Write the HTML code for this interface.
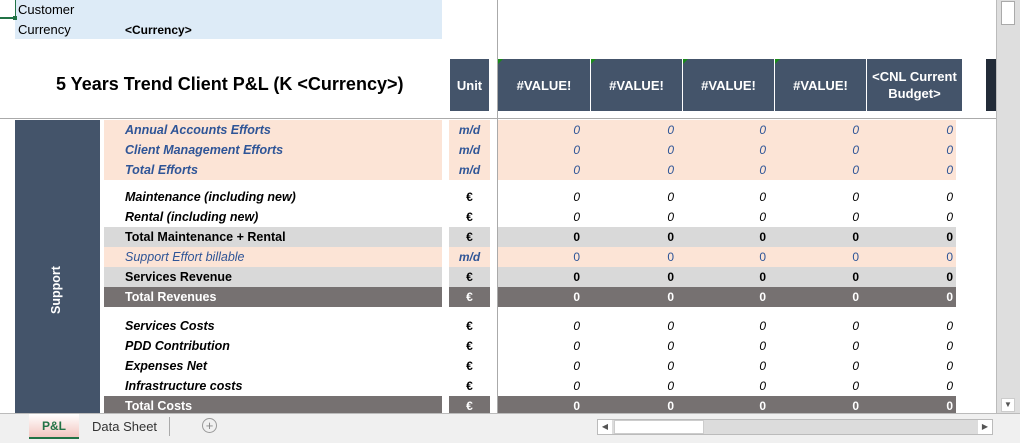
<!DOCTYPE html>
<html><head><meta charset="utf-8"><style>
*{margin:0;padding:0;box-sizing:border-box}
body{width:1020px;height:443px;overflow:hidden;background:#fff;font-family:"Liberation Sans",sans-serif;position:relative;font-size:12px}
.a{position:absolute}
.r{position:absolute;left:104px;width:852px;height:20px}
.lb{position:absolute;left:21px;top:3px;white-space:nowrap;font-size:12.5px}
.u{position:absolute;left:345px;width:41px;top:0;height:20px;text-align:center;padding-top:3px}
.v{position:absolute;top:3px;width:20px;text-align:right}
.h{position:absolute;top:59px;height:52px;background:#44546a;color:#fff;font-weight:bold;font-size:13px;display:flex;align-items:center;justify-content:center;text-align:center;line-height:17px}
.g{border-left:0;width:0;height:0;position:absolute;left:0;top:0;border-top:5px solid #1a8a1a;border-right:5px solid transparent}
</style></head><body>
<div class="a" style="left:15px;top:0;width:427px;height:39px;background:#ddebf7"></div>
<div class="a" style="left:18px;top:2px;font-size:13px">Customer</div>
<div class="a" style="left:18px;top:22px;font-size:13px">Currency</div>
<div class="a" style="left:125px;top:23px;font-weight:bold;font-size:12px">&lt;Currency&gt;</div>
<div class="a" style="left:15px;top:0;width:1px;height:18px;background:#217346"></div>
<div class="a" style="left:0;top:17px;width:15px;height:2px;background:#217346"></div>
<div class="a" style="left:13px;top:16px;width:4px;height:4px;background:#217346"></div>
<div class="a" style="left:497px;top:0;width:1px;height:413px;background:#aaa"></div>
<div class="a" style="left:0;top:118px;width:996px;height:1px;background:#aaa"></div>
<div class="a" style="left:56px;top:74px;font-weight:bold;font-size:18px">5 Years Trend Client P&amp;L (K &lt;Currency&gt;)</div>
<div class="h" style="left:450px;width:39px">Unit</div>
<div class="h" style="left:498px;width:92px"><i class="g"></i>#VALUE!</div>
<div class="h" style="left:591px;width:91px"><i class="g"></i>#VALUE!</div>
<div class="h" style="left:683px;width:91px"><i class="g"></i>#VALUE!</div>
<div class="h" style="left:775px;width:91px"><i class="g"></i>#VALUE!</div>
<div class="h" style="left:867px;width:95px">&lt;CNL Current<br>Budget&gt;</div>
<div class="a" style="left:986px;top:59px;width:10px;height:52px;background:#222b38"></div>
<div class="a" style="left:15px;top:120px;width:85px;height:293px;background:#44546a"></div>
<div class="a" style="left:49px;top:314px;transform:rotate(-90deg);transform-origin:0 0;color:#fff;font-weight:bold;font-size:12.5px;white-space:nowrap">Support</div>
<div id="rows"></div>
<div class="a" style="left:996px;top:0;width:24px;height:413px;background:#dedede;border-left:1px solid #bbb"></div>
<div class="a" style="left:1001px;top:1px;width:14px;height:24px;background:#fff;border:1px solid #aaa"></div>
<div class="a" style="left:1001px;top:398px;width:14px;height:14px;background:#fff;border:1px solid #ccc;font-size:8px;text-align:center;line-height:12px;color:#555">▼</div>
<div class="a" style="left:0;top:413px;width:1020px;height:30px;background:#f0f0f0;border-top:1px solid #bbb"></div>
<div class="a" style="left:29px;top:414px;width:50px;height:25px;background:linear-gradient(#fff,#f2c6c0);border-bottom:2px solid #217346;color:#217346;font-weight:bold;text-align:center;line-height:24px">P&amp;L</div>
<div class="a" style="left:92px;top:419px;font-size:13px;color:#333">Data Sheet</div>
<div class="a" style="left:169px;top:417px;width:1px;height:19px;background:#aaa"></div>
<div class="a" style="left:202px;top:418px;width:15px;height:15px;border:1px solid #999;border-radius:50%;text-align:center;line-height:13px;color:#888;font-size:13px">+</div>
<div class="a" style="left:597px;top:419px;width:396px;height:16px;background:#dcdcdc;border:1px solid #bbb"></div>
<div class="a" style="left:614px;top:420px;width:90px;height:14px;background:#fff;border:1px solid #ccc"></div>
<div class="a" style="left:598px;top:420px;width:14px;height:14px;background:#fff;font-size:8px;text-align:center;line-height:14px;color:#555">◀</div>
<div class="a" style="left:978px;top:420px;width:14px;height:14px;background:#fff;font-size:8px;text-align:center;line-height:14px;color:#555">▶</div>
<script>
var R=[
[120,'Annual Accounts Efforts','m/d','p','bi'],
[140,'Client Management Efforts','m/d','p','bi'],
[160,'Total Efforts','m/d','p','bi'],
[187,'Maintenance (including new)','€','w','ki'],
[207,'Rental (including new)','€','w','ki'],
[227,'Total Maintenance + Rental','€','g','kb'],
[247,'Support Effort billable','m/d','p','bt'],
[267,'Services Revenue','€','g','kb'],
[287,'Total Revenues','€','d','wb'],
[316,'Services Costs','€','w','ki'],
[336,'PDD Contribution','€','w','ki'],
[356,'Expenses Net','€','w','ki'],
[376,'Infrastructure costs','€','w','ki'],
[396,'Total Costs','€','d','wb']];
var bg={p:'#fce4d6',w:'#fff',g:'#d9d9d9',d:'#767171'};
var h='';
R.forEach(function(r){
 var c=r[4],col=c[0]=='b'?'#2f5597':(c[0]=='w'?'#fff':'#000');
 var lab=(c=='bi'||c=='bt'||c=='ki')?'font-style:italic;':'';
 var lw=(c=='bt')?'':'font-weight:bold;';
 var ht=r[0]==396?17:20;
 h+='<div class="r" style="top:'+r[0]+'px;height:'+ht+'px">';
 h+='<div class="a" style="left:0;top:0;width:338px;height:'+ht+'px;background:'+bg[r[3]]+'"></div>';
 h+='<div class="lb" style="color:'+col+';'+lab+lw+'">'+r[1]+'</div>';
 h+='<div class="u" style="background:'+bg[r[3]]+';color:'+col+';font-weight:bold;'+(r[2]=='m/d'?'font-style:italic;':'')+'height:'+ht+'px">'+r[2]+'</div>';
 h+='<div class="a" style="left:394px;top:0;width:458px;height:'+ht+'px;background:'+bg[r[3]]+'"></div>';
 var nv=(c[1]=='i')?'font-style:italic;':'font-weight:bold;';
 if(c=='bi')nv='font-style:italic;';
 if(c=='bt')nv='';
 [476,570,662,755,849].forEach(function(x){h+='<div class="v" style="left:'+(x-20)+'px;color:'+col+';'+nv+'">0</div>';});
 h+='</div>';
});
document.getElementById('rows').innerHTML=h;
</script>
</body></html>
